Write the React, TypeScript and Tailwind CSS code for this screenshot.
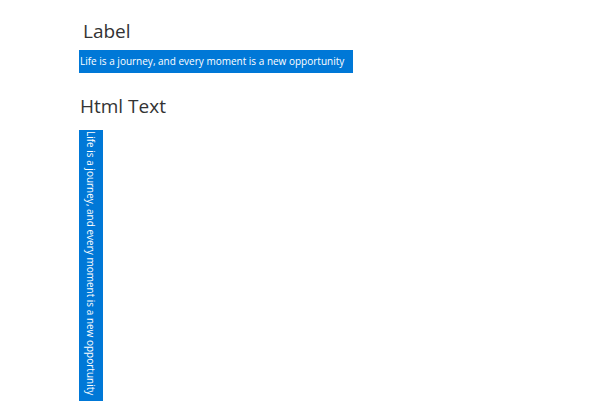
export default function App() {
  const text = 'Life is a journey, and every moment is a new opportunity'
  return (
    <div className="w-[600px] h-[413px] bg-white font-['Open_Sans',sans-serif] text-[#333] pl-[79px] pt-[18px]">
      <div className="pl-[4px] text-[19px] leading-[27px]">Label</div>
      <div className="mt-[5px] inline-block bg-[#0078d7] text-white text-[10px] leading-[23px] pl-[1px] pr-[9px] whitespace-nowrap">
        {text}
      </div>
      <div className="mt-[20px] pl-[1px] text-[19px] leading-[27px]">Html Text</div>
      <div className="mt-[10px] inline-block bg-[#0078d7] text-white text-[10px] leading-[24px] pt-[1px] pb-[6px] whitespace-nowrap [writing-mode:vertical-rl]">
        {text}
      </div>
    </div>
  )
}
